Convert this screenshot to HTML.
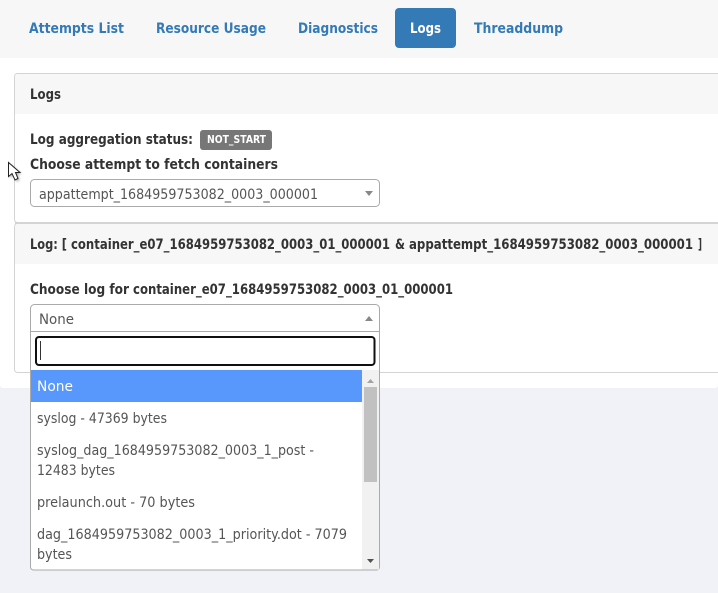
<!DOCTYPE html>
<html><head><meta charset="utf-8"><style>
html,body{margin:0;padding:0;width:718px;height:593px;overflow:hidden;background:#f0f2f7}
svg{display:block}
text{font-family:"DejaVu Sans","Liberation Sans",sans-serif;font-size:14px;fill:#333}
.b{font-weight:bold}
.l{fill:#337ab7}
.o{fill:#555}
</style></head><body>
<svg width="718" height="593" viewBox="0 0 718 593" xmlns="http://www.w3.org/2000/svg">
<defs><filter id="s" x="-50%" y="-50%" width="200%" height="200%"><feGaussianBlur stdDeviation="1.2"/></filter></defs>
<rect x="0" y="0" width="718" height="388" rx="3" fill="#fff"/>
<rect x="0" y="0" width="718" height="58" fill="#f7f7f7"/>
<rect x="395" y="8" width="61" height="40" rx="4" fill="#337ab7"/>
<text class="b l" x="29" y="33" textLength="95" lengthAdjust="spacingAndGlyphs">Attempts List</text>
<text class="b l" x="156" y="33" textLength="110" lengthAdjust="spacingAndGlyphs">Resource Usage</text>
<text class="b l" x="298" y="33" textLength="80" lengthAdjust="spacingAndGlyphs">Diagnostics</text>
<text class="b" style="fill:#fff" x="410" y="33" textLength="31" lengthAdjust="spacingAndGlyphs">Logs</text>
<text class="b l" x="474" y="33" textLength="89" lengthAdjust="spacingAndGlyphs">Threaddump</text>

<rect x="14.5" y="73.5" width="720" height="149" rx="3" fill="#fff" stroke="#d4d4d4"/>
<path d="M15 114V77a3 3 0 0 1 3-3H718V114Z" fill="#f7f7f7"/>
<rect x="14.5" y="223.5" width="720" height="149" rx="3" fill="#fff" stroke="#d4d4d4"/>
<path d="M15 264V227a3 3 0 0 1 3-3H718V264Z" fill="#f7f7f7"/>
<rect x="15" y="222" width="703" height="2" fill="#d4d4d4"/>

<text class="b" x="30" y="99" textLength="31" lengthAdjust="spacingAndGlyphs">Logs</text>
<text class="b" x="30" y="144" textLength="163" lengthAdjust="spacingAndGlyphs">Log aggregation status:</text>
<rect x="200" y="130" width="72" height="20" rx="3" fill="#777"/>
<text class="b" style="fill:#fff;font-size:10.5px" x="207" y="143" textLength="59" lengthAdjust="spacingAndGlyphs">NOT_START</text>
<text class="b" x="30" y="169" textLength="248" lengthAdjust="spacingAndGlyphs">Choose attempt to fetch containers</text>

<rect x="30.5" y="179.5" width="349" height="27" rx="4" fill="#fff" stroke="#aaa"/>
<text class="o" x="39" y="199" textLength="279" lengthAdjust="spacingAndGlyphs">appattempt_1684959753082_0003_000001</text>
<path d="M365 191h8l-4 5Z" fill="#888"/>

<text class="b" x="30" y="249" textLength="37" lengthAdjust="spacingAndGlyphs">Log: [</text>
<text class="b" x="71" y="249" textLength="319" lengthAdjust="spacingAndGlyphs">container_e07_1684959753082_0003_01_000001</text>
<text class="b" x="395" y="249" textLength="10" lengthAdjust="spacingAndGlyphs">&amp;</text>
<text class="b" x="409" y="249" textLength="284" lengthAdjust="spacingAndGlyphs">appattempt_1684959753082_0003_000001</text>
<text class="b" x="698" y="249" textLength="4" lengthAdjust="spacingAndGlyphs">]</text>
<text class="b" x="30" y="294" textLength="99" lengthAdjust="spacingAndGlyphs">Choose log for</text>
<text class="b" x="133" y="294" textLength="320" lengthAdjust="spacingAndGlyphs">container_e07_1684959753082_0003_01_000001</text>

<path d="M30.5 331.5V308.500a4 4 0 0 1 4-4H375.500a4 4 0 0 1 4 4V331.500Z" fill="#fff" stroke="#aaa"/>
<text class="o" x="39" y="324" textLength="35" lengthAdjust="spacingAndGlyphs">None</text>
<path d="M365 321h8l-4-5Z" fill="#888"/>

<path d="M30.500 331.500H379.500V567a3 3 0 0 1-3 3H33.500a3 3 0 0 1-3-3Z" fill="#fff" stroke="#aaa"/>
<rect x="36" y="337" width="338.500" height="28" rx="3" fill="#fff" stroke="#101010" stroke-width="2"/>
<rect x="40" y="341" width="1" height="19" fill="#333"/>

<rect x="31" y="370" width="331" height="32" fill="#5897fb"/>
<text style="fill:#fff" x="37" y="391" textLength="36" lengthAdjust="spacingAndGlyphs">None</text>
<text class="o" x="37" y="423" textLength="130" lengthAdjust="spacingAndGlyphs">syslog - 47369 bytes</text>
<text class="o" x="37" y="455" textLength="277" lengthAdjust="spacingAndGlyphs">syslog_dag_1684959753082_0003_1_post -</text>
<text class="o" x="37" y="475" textLength="78" lengthAdjust="spacingAndGlyphs">12483 bytes</text>
<text class="o" x="37" y="507" textLength="158" lengthAdjust="spacingAndGlyphs">prelaunch.out - 70 bytes</text>
<text class="o" x="37" y="539" textLength="310" lengthAdjust="spacingAndGlyphs">dag_1684959753082_0003_1_priority.dot - 7079</text>
<text class="o" x="37" y="559" textLength="35" lengthAdjust="spacingAndGlyphs">bytes</text>

<rect x="362" y="370" width="17" height="199.500" fill="#f1f1f1"/>
<rect x="364" y="387" width="13" height="95" fill="#c1c1c1"/>
<path d="M367 383h7l-3.500-4Z" fill="#a3a3a3"/>
<path d="M367 559h7l-3.500 4Z" fill="#505050"/>

<path d="M10 164V178L13.500 175L16.500 181.500L19.500 180L17 174H21.500Z" fill="#555" opacity=".55" filter="url(#s)"/>
<path d="M8.500 162.500V176.500L12 173.500L15 180L18 178.500L15.500 172.500H20Z" fill="#fff" stroke="#222" stroke-width="1"/>
</svg>
</body></html>
